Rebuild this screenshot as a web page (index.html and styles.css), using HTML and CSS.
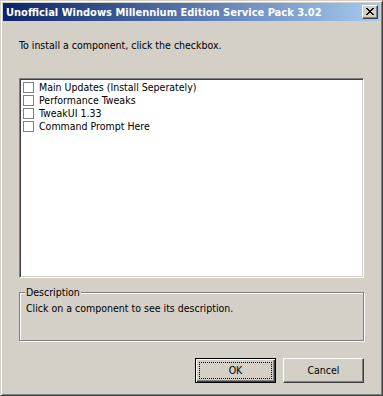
FILE: index.html
```html
<!DOCTYPE html>
<html>
<head>
<meta charset="utf-8">
<link rel="stylesheet" href="styles.css">
</head>
<body>
<div class="window">
  <div class="titlebar">
    <span class="title">Unofficial Windows Millennium Edition Service Pack 3.02</span>
    <div class="close">
      <svg width="8" height="7" viewBox="0 0 8 7" shape-rendering="crispEdges">
        <path d="M0 0h2v1h-2zM6 0h2v1h-2zM1 1h2v1h-2zM5 1h2v1h-2zM2 2h4v1h-4zM3 3h2v1h-2zM2 4h4v1h-4zM1 5h2v1h-2zM5 5h2v1h-2zM0 6h2v1h-2zM6 6h2v1h-2z" fill="#000"/>
      </svg>
    </div>
  </div>
  <div class="content">
    <p class="intro">To install a component, click the checkbox.</p>
    <div class="listbox">
      <div class="item"><span class="cb"></span><span class="label">Main Updates (Install Seperately)</span></div>
      <div class="item"><span class="cb"></span><span class="label">Performance Tweaks</span></div>
      <div class="item"><span class="cb"></span><span class="label">TweakUI 1.33</span></div>
      <div class="item"><span class="cb"></span><span class="label">Command Prompt Here</span></div>
    </div>
    <div class="group">
      <span class="group-label">Description</span>
      <p class="desc">Click on a component to see its description.</p>
    </div>
    <div class="buttons">
      <div class="btn default"><span class="focus">OK</span></div>
      <div class="btn">Cancel</div>
    </div>
  </div>
</div>
</body>
</html>
```
FILE: styles.css
```css
html, body {
  margin: 0;
  padding: 0;
  background: #d4d0c8;
}
body {
  font-family: "DejaVu Sans Condensed", "Liberation Sans", sans-serif;
  font-size: 10.5px;
  line-height: 13px;
  color: #000;
}
.window {
  box-sizing: border-box;
  width: 383px;
  height: 396px;
  border: 1px solid;
  border-color: #d4d0c8 #404040 #404040 #d4d0c8;
  box-shadow: inset 1px 1px 0 #fff, inset -1px -1px 0 #808080;
  padding: 2px;
  background: #d4d0c8;
}
.titlebar {
  height: 18px;
  background: linear-gradient(to right, #0a246a, #a6caf0);
  display: flex;
  align-items: center;
  padding: 0 2px 0 3px;
}
.title {
  flex: 1;
  color: #fff;
  font-weight: bold;
  font-size: 11px;
  white-space: nowrap;
}
.close {
  box-sizing: border-box;
  width: 16px;
  height: 14px;
  background: #d4d0c8;
  border: 1px solid;
  border-color: #fff #404040 #404040 #fff;
  box-shadow: inset -1px -1px 0 #808080;
  display: flex;
  justify-content: center;
  align-items: center;
  padding: 0 1px 1px 0;
}
.close svg { display: block; }
.content {
  padding: 0 16px;
}
.intro {
  margin: 18px 0 0;
}
.listbox {
  box-sizing: border-box;
  margin-top: 26px;
  height: 200px;
  background: #fff;
  border: 1px solid;
  border-color: #808080 #fff #fff #808080;
  box-shadow: inset 1px 1px 0 #404040, inset -1px -1px 0 #d4d0c8;
  padding: 2px 2px;
}
.item {
  display: flex;
  align-items: center;
  height: 13px;
}
.cb {
  box-sizing: border-box;
  width: 11px;
  height: 11px;
  border: 1px solid #808080;
  background: #fff;
  margin-left: 1px;
  margin-right: 5px;
}
.group {
  box-sizing: border-box;
  margin-top: 14px;
  height: 49px;
  border: 1px solid #808080;
  box-shadow: inset 1px 1px 0 #fff, 1px 1px 0 #fff;
  padding: 0 6px;
}
.group-label {
  display: block;
  width: fit-content;
  margin: -7px 0 0 -1px;
  padding: 0 1px;
  background: #d4d0c8;
}
.desc {
  margin: 3px 0 0;
}
.buttons {
  margin-top: 17px;
  display: flex;
  justify-content: flex-end;
  gap: 7px;
}
.btn {
  box-sizing: border-box;
  width: 81px;
  height: 25px;
  border: 1px solid;
  border-color: #fff #404040 #404040 #fff;
  box-shadow: inset -1px -1px 0 #808080;
  display: flex;
  justify-content: center;
  align-items: center;
}
.btn.default {
  border: 1px solid #000;
  box-shadow: inset 1px 1px 0 #fff, inset -1px -1px 0 #404040, inset -2px -2px 0 #808080;
  padding: 2px;
}
.focus {
  box-sizing: border-box;
  flex: 1;
  align-self: stretch;
  margin: 1px;
  border: 1px dotted #000;
  display: flex;
  justify-content: center;
  align-items: center;
}
```
